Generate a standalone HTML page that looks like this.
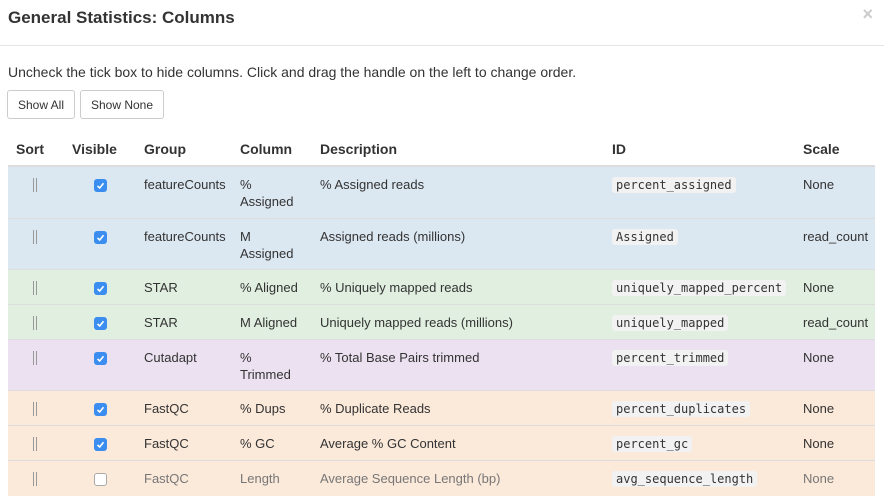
<!DOCTYPE html>
<html><head><style>
body{margin:0;width:884px;height:495px;overflow:hidden;background:#fff;font-family:"Liberation Sans",sans-serif;color:#333;position:relative}
.a{position:absolute;white-space:nowrap}
.title{left:8px;top:8px;font-size:17px;font-weight:bold;color:#333}
.x{right:11px;top:4px;font-size:18px;color:#ccc;font-weight:bold}
.hr{left:0;top:45px;width:884px;height:1px;background:#e5e5e5}
.btn{top:90px;height:29px;border:1px solid #ccc;border-radius:3px;font-size:12px;line-height:29px;text-align:center;box-sizing:border-box;color:#333}
.th{top:141px;font-size:14px;font-weight:bold;color:#333}
.row{position:absolute;left:8px;width:867px;border-top:1px solid #ddd;font-size:13px;line-height:17px}
.row div{position:absolute;top:9px;white-space:nowrap}
.h{left:25px;width:4px;height:14px;border-left:1px solid #999;border-right:1px solid #999;box-sizing:border-box;top:11px!important}
.cb{left:86px;width:13px;height:13px;border-radius:3px;background:#3b8ef0;top:12px!important}
.cb svg{position:absolute;left:1px;top:1px}
.cb.off{background:#fff;border:1px solid #aaa;box-sizing:border-box}
code{font-family:"DejaVu Sans Mono",monospace;font-size:12px;background:#f2f2f2;padding:1px 4px;border-radius:3px;color:#333}
.b{background:#dbe7f1}.g{background:#e0efdf}.p{background:#ebe1f0}.o{background:#fbe9da}
.grey{color:#777}
</style></head><body>
<div class="a title">General Statistics: Columns</div>
<div class="a x">×</div>
<div class="a hr"></div>
<div class="a" style="left:8px;top:64px;font-size:14px">Uncheck the tick box to hide columns. Click and drag the handle on the left to change order.</div>
<div class="a btn" style="left:7px;width:68px">Show All</div>
<div class="a btn" style="left:80px;width:84px">Show None</div>
<div class="a th" style="left:16px">Sort</div>
<div class="a th" style="left:72px">Visible</div>
<div class="a th" style="left:144px">Group</div>
<div class="a th" style="left:240px">Column</div>
<div class="a th" style="left:320px">Description</div>
<div class="a th" style="left:612px">ID</div>
<div class="a th" style="left:803px">Scale</div>
<div class="a" style="left:8px;top:165px;width:867px;height:2px;background:#ddd"></div>

<div class="row b" style="top:167px;height:51px;border-top:none"><div class="h"></div><div class="cb"><svg width="11" height="11"><path d="M2.5 6L4.7 8L8.5 3.2" stroke="#fff" stroke-width="1.6" fill="none"/></svg></div><div style="left:136px">featureCounts</div><div style="left:232px">%<br>Assigned</div><div style="left:312px">% Assigned reads</div><div style="left:604px"><code>percent_assigned</code></div><div style="left:795px">None</div></div>
<div class="row b" style="top:218px;height:51px"><div class="h"></div><div class="cb"><svg width="11" height="11"><path d="M2.5 6L4.7 8L8.5 3.2" stroke="#fff" stroke-width="1.6" fill="none"/></svg></div><div style="left:136px">featureCounts</div><div style="left:232px">M<br>Assigned</div><div style="left:312px">Assigned reads (millions)</div><div style="left:604px"><code>Assigned</code></div><div style="left:795px">read_count</div></div>
<div class="row g" style="top:269px;height:35px"><div class="h"></div><div class="cb"><svg width="11" height="11"><path d="M2.5 6L4.7 8L8.5 3.2" stroke="#fff" stroke-width="1.6" fill="none"/></svg></div><div style="left:136px">STAR</div><div style="left:232px">% Aligned</div><div style="left:312px">% Uniquely mapped reads</div><div style="left:604px"><code>uniquely_mapped_percent</code></div><div style="left:795px">None</div></div>
<div class="row g" style="top:304px;height:35px"><div class="h"></div><div class="cb"><svg width="11" height="11"><path d="M2.5 6L4.7 8L8.5 3.2" stroke="#fff" stroke-width="1.6" fill="none"/></svg></div><div style="left:136px">STAR</div><div style="left:232px">M Aligned</div><div style="left:312px">Uniquely mapped reads (millions)</div><div style="left:604px"><code>uniquely_mapped</code></div><div style="left:795px">read_count</div></div>
<div class="row p" style="top:339px;height:51px"><div class="h"></div><div class="cb"><svg width="11" height="11"><path d="M2.5 6L4.7 8L8.5 3.2" stroke="#fff" stroke-width="1.6" fill="none"/></svg></div><div style="left:136px">Cutadapt</div><div style="left:232px">%<br>Trimmed</div><div style="left:312px">% Total Base Pairs trimmed</div><div style="left:604px"><code>percent_trimmed</code></div><div style="left:795px">None</div></div>
<div class="row o" style="top:390px;height:35px"><div class="h"></div><div class="cb"><svg width="11" height="11"><path d="M2.5 6L4.7 8L8.5 3.2" stroke="#fff" stroke-width="1.6" fill="none"/></svg></div><div style="left:136px">FastQC</div><div style="left:232px">% Dups</div><div style="left:312px">% Duplicate Reads</div><div style="left:604px"><code>percent_duplicates</code></div><div style="left:795px">None</div></div>
<div class="row o" style="top:425px;height:35px"><div class="h"></div><div class="cb"><svg width="11" height="11"><path d="M2.5 6L4.7 8L8.5 3.2" stroke="#fff" stroke-width="1.6" fill="none"/></svg></div><div style="left:136px">FastQC</div><div style="left:232px">% GC</div><div style="left:312px">Average % GC Content</div><div style="left:604px"><code>percent_gc</code></div><div style="left:795px">None</div></div>
<div class="row o grey" style="top:460px;height:35px"><div class="h"></div><div class="cb off"></div><div style="left:136px">FastQC</div><div style="left:232px">Length</div><div style="left:312px">Average Sequence Length (bp)</div><div style="left:604px"><code>avg_sequence_length</code></div><div style="left:795px">None</div></div>
</body></html>
